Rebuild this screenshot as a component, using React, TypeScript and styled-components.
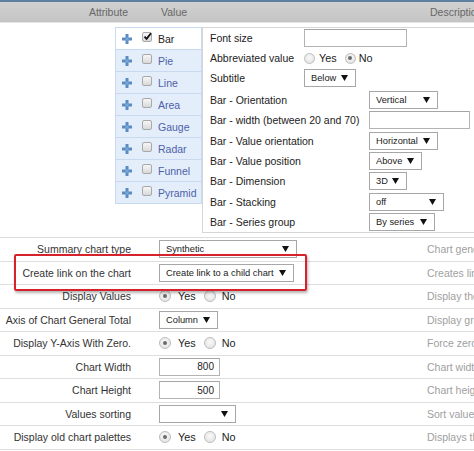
import React from "react";
import styled, { createGlobalStyle } from "styled-components";

const GlobalStyle = createGlobalStyle`
  html, body { margin: 0; padding: 0; background: #fff; overflow: hidden; }
  body {
    font-family: "Liberation Sans", Arial, sans-serif;
    font-size: 10.5px;
    color: #333;
  }
  * { box-sizing: border-box; }
`;

const Page = styled.div`
  position: relative;
  width: 640px;
`;

const Header = styled.div`
  display: grid;
  grid-template-columns: 155px 268px 1fr;
  align-items: center;
  height: 23px;
  border-top: 2px solid #61809f;
  border-bottom: 1px solid #e4e4e4;
  background: linear-gradient(#d1d1d1, #c4c4c4);
  color: #676767;
  font-size: 10.5px;
`;

const HeaderCell = styled.div<{ $align: "left" | "right"; $pad: number }>`
  text-align: ${(p) => p.$align};
  padding-${(p) => p.$align}: ${(p) => p.$pad}px;
  white-space: nowrap;
`;

const ConfigRow = styled.div`
  display: flex;
  align-items: flex-start;
  padding: 4px 0 4px 115px;
  border-bottom: 1px solid #dcdcdc;
`;

const SeriesList = styled.div`
  width: 87px;
  flex-shrink: 0;
  border: 1px solid #c8daf0;
  border-bottom: none;
`;

const SeriesItem = styled.div<{ $selected?: boolean }>`
  display: flex;
  align-items: center;
  height: 22px;
  padding-left: 6px;
  border-bottom: 1px solid #c8daf0;
  background: ${(p) => (p.$selected ? "#ffffff" : "#e4eefb")};
  color: ${(p) => (p.$selected ? "#222" : "#4e60a8")};
  font-size: 10.5px;
`;

const PlusIcon = styled.svg`
  width: 10px;
  height: 10px;
  flex-shrink: 0;
  margin-right: 10px;
`;

const CheckBox = styled.span`
  position: relative;
  width: 10px;
  height: 10px;
  flex-shrink: 0;
  border: 1px solid #a9a9a9;
  border-radius: 2px;
  background: linear-gradient(#f6f6f6, #d9d9d9);
  margin-right: 6px;
  margin-top: -3px;
`;

const CheckMark = styled.svg`
  position: absolute;
  left: 0px;
  top: -1px;
  width: 9px;
  height: 9px;
`;

const Panel = styled.div`
  flex: 1;
  height: 206px;
  border: 1px solid #d6d6d6;
  background: #fff;
  padding: 0 0 1px 7px;
`;

const PanelGroup = styled.div<{ $labelWidth: number; $rowHeight: number; $top: number }>`
  display: grid;
  grid-template-columns: ${(p) => p.$labelWidth}px auto;
  grid-auto-rows: ${(p) => p.$rowHeight}px;
  align-items: center;
  justify-items: start;
  margin-top: ${(p) => p.$top}px;
  color: #222;
`;

const PanelLabel = styled.div`
  white-space: nowrap;
`;

const TextInput = styled.input<{ $w: number; $right?: boolean }>`
  width: ${(p) => p.$w}px;
  height: 18px;
  border: 1px solid #b3b3b3;
  border-top-color: #a5a5a5;
  padding: 0 5px;
  font-family: "Liberation Sans", Arial, sans-serif;
  font-size: 10px;
  color: #222;
  text-align: ${(p) => (p.$right ? "right" : "left")};
  outline: none;
  background: #fff;
`;

const SelectBox = styled.div<{ $w: number }>`
  display: flex;
  align-items: center;
  justify-content: space-between;
  width: ${(p) => p.$w}px;
  height: 18px;
  border: 1px solid #a7a7a7;
  padding: 0 7px 0 6px;
  background: #fff;
  font-size: 9.3px;
  color: #1a1a1a;
  white-space: nowrap;
`;

const Arrow = styled.svg`
  width: 7px;
  height: 6px;
  flex-shrink: 0;
  margin-left: 4px;
`;

const RadioGroup = styled.div`
  display: flex;
  align-items: center;
  gap: 8px;
  color: #222;
  font-size: 10.8px;
`;

const RadioOption = styled.label<{ $gap: number }>`
  display: flex;
  align-items: center;
  gap: ${(p) => p.$gap}px;
`;

const RadioDot = styled.span<{ $checked?: boolean; $size: number }>`
  position: relative;
  width: ${(p) => p.$size}px;
  height: ${(p) => p.$size}px;
  border-radius: 50%;
  border: 1px solid #bdbdbd;
  background: radial-gradient(circle at 50% 40%, #fafafa, #dedede);
  &::after {
    content: "";
    display: ${(p) => (p.$checked ? "block" : "none")};
    position: absolute;
    left: 50%;
    top: 50%;
    width: 4px;
    height: 4px;
    margin: -2px 0 0 -2px;
    border-radius: 50%;
    background: #6b6b6b;
  }
`;

const Row = styled.div`
  display: grid;
  grid-template-columns: 155px 268px 1fr;
  align-items: center;
  height: 23.5px;
  border-bottom: 1px solid #dedede;
`;

const RowLabel = styled.div`
  text-align: right;
  padding-right: 24px;
  white-space: nowrap;
  color: #333;
`;

const RowValue = styled.div`
  display: flex;
  align-items: center;
  padding-left: 4px;
`;

const RowDesc = styled.div`
  padding-left: 4px;
  white-space: nowrap;
  overflow: hidden;
  color: #a0a0a0;
`;

const Highlight = styled.div`
  position: absolute;
  left: 14px;
  top: 254px;
  width: 293px;
  height: 37px;
  border: 2px solid #d6232b;
  border-radius: 2px;
  box-shadow: 1px 2px 3px rgba(0, 0, 0, 0.3);
  pointer-events: none;
`;

const Plus = () => (
  <PlusIcon viewBox="0 0 10 10">
    <rect x="3.5" y="0" width="3" height="10" fill="#5a8cc1" />
    <rect x="0" y="3.5" width="10" height="3" fill="#5a8cc1" />
    <rect x="3.5" y="3.5" width="3" height="3" fill="#7aa6d4" />
  </PlusIcon>
);

const Select = ({ w, value }: { w: number; value: string }) => (
  <SelectBox $w={w}>
    <span>{value}</span>
    <Arrow viewBox="0 0 7 6">
      <polygon points="0,0 7,0 3.5,6" fill="#111" />
    </Arrow>
  </SelectBox>
);

const YesNo = ({ yes, size = 11 }: { yes: boolean; size?: number }) => {
  const gap = size >= 12 ? 7 : 4;
  return (
    <RadioGroup>
      <RadioOption $gap={gap}>
        <RadioDot $checked={yes} $size={size} />
        Yes
      </RadioOption>
      <RadioOption $gap={gap - 1}>
        <RadioDot $checked={!yes} $size={size} />
        No
      </RadioOption>
    </RadioGroup>
  );
};

const series = ["Bar", "Pie", "Line", "Area", "Gauge", "Radar", "Funnel", "Pyramid"];

type RowData = { label: string; value: React.ReactNode; desc: string };

const rows: RowData[] = [
  { label: "Summary chart type", value: <Select w={138} value="Synthetic" />, desc: "Chart general type" },
  {
    label: "Create link on the chart",
    value: <Select w={135} value="Create link to a child chart" />,
    desc: "Creates link to a child chart",
  },
  { label: "Display Values", value: <YesNo yes size={12} />, desc: "Display the values" },
  { label: "Axis of Chart General Total", value: <Select w={59} value="Column" />, desc: "Display grand total axis" },
  { label: "Display Y-Axis With Zero.", value: <YesNo yes size={12} />, desc: "Force zero on Y-axis" },
  { label: "Chart Width", value: <TextInput $w={61} $right defaultValue="800" />, desc: "Chart width in pixels" },
  { label: "Chart Height", value: <TextInput $w={61} $right defaultValue="500" />, desc: "Chart height in pixels" },
  { label: "Values sorting", value: <Select w={77} value="" />, desc: "Sort values" },
  { label: "Display old chart palettes", value: <YesNo yes size={12} />, desc: "Displays the old palettes" },
];

export default function App() {
  return (
    <>
      <GlobalStyle />
      <Page>
        <Header>
          <HeaderCell $align="right" $pad={27}>Attribute</HeaderCell>
          <HeaderCell $align="left" $pad={6}>Value</HeaderCell>
          <HeaderCell $align="left" $pad={7}>Description</HeaderCell>
        </Header>

        <ConfigRow>
          <SeriesList>
            {series.map((s, i) => (
              <SeriesItem key={s} $selected={i === 0}>
                <Plus />
                <CheckBox>
                  {i === 0 && (
                    <CheckMark viewBox="0 0 9 9">
                      <path d="M1.5 4.6 L3.6 6.8 L8 1.2" fill="none" stroke="#111" strokeWidth="1.8" />
                    </CheckMark>
                  )}
                </CheckBox>
                {s}
              </SeriesItem>
            ))}
          </SeriesList>

          <Panel>
            <PanelGroup $labelWidth={94} $rowHeight={20} $top={0}>
              <PanelLabel>Font size</PanelLabel>
              <TextInput $w={103} defaultValue="" />
              <PanelLabel>Abbreviated value</PanelLabel>
              <YesNo yes={false} size={11} />
              <PanelLabel>Subtitle</PanelLabel>
              <Select w={52} value="Below" />
            </PanelGroup>
            <PanelGroup $labelWidth={159} $rowHeight={20.3} $top={2}>
              <PanelLabel>Bar - Orientation</PanelLabel>
              <Select w={69} value="Vertical" />
              <PanelLabel>Bar - width (between 20 and 70)</PanelLabel>
              <TextInput $w={101} defaultValue="" />
              <PanelLabel>Bar - Value orientation</PanelLabel>
              <Select w={69} value="Horizontal" />
              <PanelLabel>Bar - Value position</PanelLabel>
              <Select w={53} value="Above" />
              <PanelLabel>Bar - Dimension</PanelLabel>
              <Select w={38} value="3D" />
              <PanelLabel>Bar - Stacking</PanelLabel>
              <Select w={75} value="off" />
              <PanelLabel>Bar - Series group</PanelLabel>
              <Select w={66} value="By series" />
            </PanelGroup>
          </Panel>
        </ConfigRow>

        {rows.map((r) => (
          <Row key={r.label}>
            <RowLabel>{r.label}</RowLabel>
            <RowValue>{r.value}</RowValue>
            <RowDesc>{r.desc}</RowDesc>
          </Row>
        ))}

        <Highlight />
      </Page>
    </>
  );
}
